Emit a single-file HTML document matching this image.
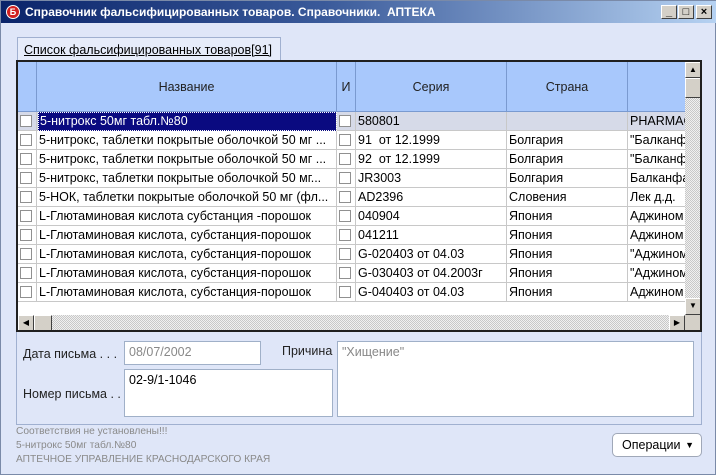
<!DOCTYPE html>
<html><head><meta charset="utf-8"><style>
*{box-sizing:border-box;margin:0;padding:0}
body{width:716px;height:475px;overflow:hidden;background:#5a6d8c;font-family:"Liberation Sans","DejaVu Sans",sans-serif;font-size:12px;color:#000;position:relative}
.win{position:absolute;left:0;top:0;width:716px;height:475px;background:#dfe6f8;border:1px solid #7a8aa8}
.title{position:absolute;left:0;top:0;width:716px;height:22px;background:linear-gradient(90deg,#0a246a 0%,#3a5a9a 45%,#b6d2f2 100%);color:#fff;font-weight:bold;font-size:12px;line-height:22px;padding-left:24px}
.ico{position:absolute;left:5px;top:4px;width:14px;height:14px;border-radius:50%;background:#d02020;border:1px solid #fff;color:#fff;font-size:9px;line-height:12px;text-align:center}
.tb{position:absolute;top:4px;width:16px;height:14px;background:#d4d0c8;border:1px solid;border-color:#fff #404040 #404040 #fff;color:#000;font-size:11px;line-height:12px;text-align:center;font-weight:bold}
.tab{position:absolute;left:16px;top:36px;width:264px;height:25px;border:1px solid #a0b0d0;border-bottom:none;background:#e6ecfa;padding:5px 0 0 6px;font-size:12.5px;text-decoration:underline}
.grid{position:absolute;left:15px;top:59px;width:686px;height:272px;border:2px solid #202020;background:#fff;overflow:hidden}
.hd{position:absolute;top:0;height:50px;background:#a8c8fc;border-right:1px solid #7a9ad0;border-bottom:1px solid #7a9ad0;text-align:center;line-height:50px;font-size:12.5px;color:#222}
.row{position:absolute;left:0;width:667px;height:19px;border-bottom:1px solid #c8c8c8}
.c{position:absolute;top:0;height:19px;border-right:1px solid #c8c8c8;white-space:nowrap;overflow:hidden;line-height:18px;padding-left:2px;font-size:12.5px}
.cb{display:inline-block;width:12px;height:12px;border:1px solid #909090;background:#fff;margin:3px 0 0 2px;vertical-align:top}
.vs{position:absolute;left:667px;top:0;width:17px;height:253px;background:repeating-conic-gradient(#c8c8c8 0 25%,#f0f0f0 0 50%) 0 0/2px 2px}
.btn{position:absolute;width:16px;background:#d4d0c8;border:1px solid;border-color:#fff #404040 #404040 #fff}
.hs{position:absolute;left:0;top:253px;width:667px;height:17px;background:repeating-conic-gradient(#c8c8c8 0 25%,#f0f0f0 0 50%) 0 0/2px 2px}
.panel{position:absolute;left:15px;top:331px;width:686px;height:93px;border:1px solid #a0b0d0;border-top:none}
.lbl{position:absolute;font-size:12.5px;color:#222}
.inp{position:absolute;background:#fff;border:1px solid #a0b0c8;font-size:12.5px;padding:3px 4px}
.sm{position:absolute;left:15px;font-size:10.2px;color:#8a8a8a}
.op{position:absolute;left:611px;top:432px;width:90px;height:24px;border:1px solid #a0a8b8;border-radius:5px;background:#fff;font-size:12.5px;line-height:22px;padding-left:9px}
</style></head><body><div class="win">
<div class="title"><div class="ico">Б</div>Справочник фальсифицированных товаров. Справочники.&nbsp; АПТЕКА
<div class="tb" style="left:660px">_</div><div class="tb" style="left:677px">□</div><div class="tb" style="left:695px">×</div></div>
<div class="tab">Список фальсифицированных товаров[91]</div>
<div class="grid">
<div class="hd" style="left:0;width:19px"></div>
<div class="hd" style="left:19px;width:300px">Название</div>
<div class="hd" style="left:319px;width:19px">И</div>
<div class="hd" style="left:338px;width:151px">Серия</div>
<div class="hd" style="left:489px;width:121px">Страна</div>
<div class="hd" style="left:610px;width:60px;border-right:none"></div>
<div class="row" style="top:50px;background:#d6dae8"><div class="c" style="left:0;width:19px;padding:0"><span class="cb"></span></div><div class="c" style="left:20px;width:299px;background:#0a0a80;color:#fff;outline:1px dotted #fff;outline-offset:-1px">5-нитрокс 50мг табл.№80</div><div class="c" style="left:319px;width:19px;padding:0"><span class="cb"></span></div><div class="c" style="left:338px;width:151px">580801</div><div class="c" style="left:489px;width:121px"></div><div class="c" style="left:610px;width:60px">PHARMAC</div></div>
<div class="row" style="top:69px"><div class="c" style="left:0;width:19px;padding:0"><span class="cb"></span></div><div class="c" style="left:19px;width:300px">5-нитрокс, таблетки покрытые оболочкой 50 мг ...</div><div class="c" style="left:319px;width:19px;padding:0"><span class="cb"></span></div><div class="c" style="left:338px;width:151px">91&nbsp; от 12.1999</div><div class="c" style="left:489px;width:121px">Болгария</div><div class="c" style="left:610px;width:60px">"Балканф</div></div>
<div class="row" style="top:88px"><div class="c" style="left:0;width:19px;padding:0"><span class="cb"></span></div><div class="c" style="left:19px;width:300px">5-нитрокс, таблетки покрытые оболочкой 50 мг ...</div><div class="c" style="left:319px;width:19px;padding:0"><span class="cb"></span></div><div class="c" style="left:338px;width:151px">92&nbsp; от 12.1999</div><div class="c" style="left:489px;width:121px">Болгария</div><div class="c" style="left:610px;width:60px">"Балканф</div></div>
<div class="row" style="top:107px"><div class="c" style="left:0;width:19px;padding:0"><span class="cb"></span></div><div class="c" style="left:19px;width:300px">5-нитрокс, таблетки покрытые оболочкой 50 мг...</div><div class="c" style="left:319px;width:19px;padding:0"><span class="cb"></span></div><div class="c" style="left:338px;width:151px">JR3003</div><div class="c" style="left:489px;width:121px">Болгария</div><div class="c" style="left:610px;width:60px">Балканфа</div></div>
<div class="row" style="top:126px"><div class="c" style="left:0;width:19px;padding:0"><span class="cb"></span></div><div class="c" style="left:19px;width:300px">5-НОК, таблетки покрытые оболочкой 50 мг (фл...</div><div class="c" style="left:319px;width:19px;padding:0"><span class="cb"></span></div><div class="c" style="left:338px;width:151px">AD2396</div><div class="c" style="left:489px;width:121px">Словения</div><div class="c" style="left:610px;width:60px">Лек д.д.</div></div>
<div class="row" style="top:145px"><div class="c" style="left:0;width:19px;padding:0"><span class="cb"></span></div><div class="c" style="left:19px;width:300px">L-Глютаминовая кислота субстанция -порошок</div><div class="c" style="left:319px;width:19px;padding:0"><span class="cb"></span></div><div class="c" style="left:338px;width:151px">040904</div><div class="c" style="left:489px;width:121px">Япония</div><div class="c" style="left:610px;width:60px">Аджином</div></div>
<div class="row" style="top:164px"><div class="c" style="left:0;width:19px;padding:0"><span class="cb"></span></div><div class="c" style="left:19px;width:300px">L-Глютаминовая кислота, субстанция-порошок</div><div class="c" style="left:319px;width:19px;padding:0"><span class="cb"></span></div><div class="c" style="left:338px;width:151px">041211</div><div class="c" style="left:489px;width:121px">Япония</div><div class="c" style="left:610px;width:60px">Аджином</div></div>
<div class="row" style="top:183px"><div class="c" style="left:0;width:19px;padding:0"><span class="cb"></span></div><div class="c" style="left:19px;width:300px">L-Глютаминовая кислота, субстанция-порошок</div><div class="c" style="left:319px;width:19px;padding:0"><span class="cb"></span></div><div class="c" style="left:338px;width:151px">G-020403 от 04.03</div><div class="c" style="left:489px;width:121px">Япония</div><div class="c" style="left:610px;width:60px">"Аджином</div></div>
<div class="row" style="top:202px"><div class="c" style="left:0;width:19px;padding:0"><span class="cb"></span></div><div class="c" style="left:19px;width:300px">L-Глютаминовая кислота, субстанция-порошок</div><div class="c" style="left:319px;width:19px;padding:0"><span class="cb"></span></div><div class="c" style="left:338px;width:151px">G-030403 от 04.2003г</div><div class="c" style="left:489px;width:121px">Япония</div><div class="c" style="left:610px;width:60px">"Аджином</div></div>
<div class="row" style="top:221px"><div class="c" style="left:0;width:19px;padding:0"><span class="cb"></span></div><div class="c" style="left:19px;width:300px">L-Глютаминовая кислота, субстанция-порошок</div><div class="c" style="left:319px;width:19px;padding:0"><span class="cb"></span></div><div class="c" style="left:338px;width:151px">G-040403 от 04.03</div><div class="c" style="left:489px;width:121px">Япония</div><div class="c" style="left:610px;width:60px">Аджином</div></div>
<div class="vs"><div class="btn" style="top:0;height:16px;font-size:8px;text-align:center;line-height:13px">▲</div><div class="btn" style="top:16px;height:20px"></div><div class="btn" style="top:236px;height:17px;font-size:8px;text-align:center;line-height:14px">▼</div></div>
<div class="hs"><div class="btn" style="left:0;top:0;height:17px;font-size:8px;text-align:center;line-height:14px">◀</div><div class="btn" style="left:16px;top:0;height:17px;width:18px"></div><div class="btn" style="left:651px;top:0;height:17px;font-size:8px;text-align:center;line-height:14px">▶</div></div>
<div style="position:absolute;left:667px;top:253px;width:17px;height:17px;background:#d4d0c8"></div>
</div>
<div class="panel"></div>
<div class="lbl" style="left:22px;top:346px">Дата письма . . .</div>
<div class="inp" style="left:123px;top:340px;width:137px;height:24px;color:#888">08/07/2002</div>
<div class="lbl" style="left:281px;top:343px">Причина</div>
<div class="inp" style="left:336px;top:340px;width:357px;height:76px;color:#888">"Хищение"</div>
<div class="lbl" style="left:22px;top:386px">Номер письма . .</div>
<div class="inp" style="left:123px;top:368px;width:209px;height:48px">02-9/1-1046</div>
<div class="sm" style="top:425px">Соответствия не установлены!!!</div>
<div class="sm" style="top:439px">5-нитрокс 50мг табл.№80</div>
<div class="sm" style="top:453px">АПТЕЧНОЕ УПРАВЛЕНИЕ КРАСНОДАРСКОГО КРАЯ</div>
<div class="op">Операции <span style="position:absolute;right:7px;font-size:9px">▼</span></div>
</div></body></html>
